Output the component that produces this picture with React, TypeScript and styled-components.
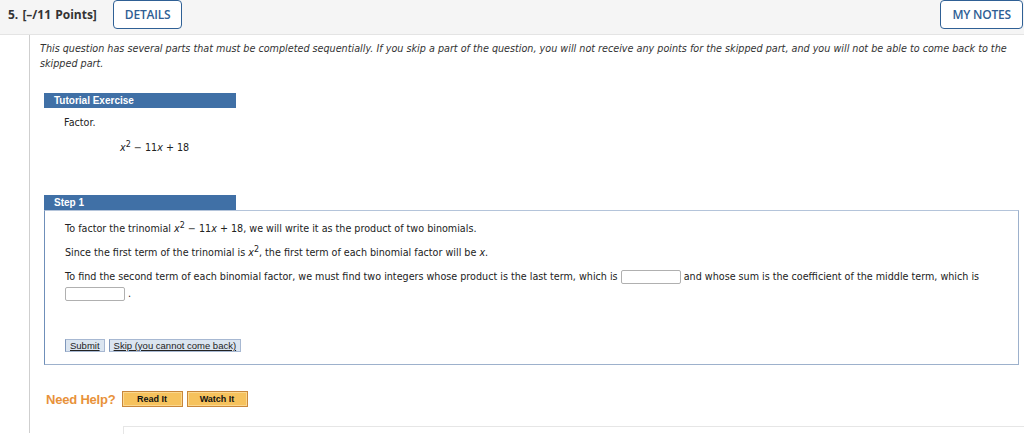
import React from 'react';
import styled, {createGlobalStyle} from 'styled-components';

const GlobalStyle = createGlobalStyle`
    html, body {
        margin: 0;
        padding: 0;
        background: #fff;
    }
    body {
        width: 1024px;
        height: 434px;
        overflow: hidden;
        font-family: "DejaVu Sans", Verdana, sans-serif;
        color: #222;
    }
    sup {
        font-size: 8px;
        line-height: 0;
        vertical-align: 4px;
    }
`

const Header = styled.header`
    display: flex;
    align-items: center;
    height: 35px;
    padding: 0 1px 6px 8px;
    box-sizing: border-box;
    background: #f5f5f5;
    border-bottom: 1px solid #e4e4e4;
`

const QuestionTitle = styled.h2`
    margin: 0;
    font-family: "Open Sans", sans-serif;
    font-size: 12px;
    font-weight: 700;
    color: #333;
    word-spacing: 1px;
`

const HeaderButton = styled.button<{ push?: boolean }>`
    height: 29px;
    margin-left: ${props => props.push ? 'auto' : '16px'};
    padding: 0 11px;
    background: #fff;
    border: 1px solid #2f6095;
    border-radius: 4px;
    font-family: "Open Sans", sans-serif;
    font-size: 12px;
    font-weight: 600;
    color: #2f6095;
    letter-spacing: -0.2px;
`

const Main = styled.main`
    margin-left: 29px;
    border-left: 1px solid #cfcfcf;
    padding: 6px 0 0 10px;
    height: 398px;
    box-sizing: border-box;
`

const Intro = styled.p`
    margin: 0;
    font-size: 9.65px;
    font-style: italic;
    line-height: 15px;
    color: #333;
    padding-right: 8px;
`

const Section = styled.section<{ top: number }>`
    margin: ${props => props.top}px 4px 0 4px;
`

const BarTitle = styled.div`
    width: 192px;
    height: 15px;
    box-sizing: border-box;
    padding-left: 10px;
    background: #4070a6;
    color: #fff;
    font-family: "Liberation Sans", Arial, sans-serif;
    font-size: 10px;
    font-weight: 700;
    line-height: 15px;
`

const Plain = styled.p<{ indent: number; top: number }>`
    margin: ${props => props.top}px 0 0 ${props => props.indent}px;
    font-size: 9.6px;
    line-height: 14px;
`

const Var = styled.i`
    font-family: "DejaVu Sans", Verdana, sans-serif;
`

const StepBox = styled.div`
    border: 1px solid #9db1cc;
    border-left-color: #6f8fb9;
    border-top-color: #b4c4da;
    padding: 11px 20px 0 20px;
    width: 975px;
    box-sizing: border-box;
    height: 155px;
    font-size: 9.6px;
`

const StepLine = styled.p<{ gap?: number }>`
    margin: 0 0 ${props => props.gap ?? 10}px 0;
    line-height: 14px;
`

const AnswerLines = styled.p`
    margin: 0;
    line-height: 17px;
`

const Answer = styled.input`
    width: 60px;
    height: 14px;
    box-sizing: border-box;
    margin: 0;
    padding: 0;
    border: 1px solid #b0b0b0;
    border-radius: 2px;
    vertical-align: middle;
`

const ButtonRow = styled.div`
    display: flex;
    gap: 4px;
    margin-top: 37px;
`

const PlainButton = styled.button`
    height: 13px;
    padding: 0 4px;
    background: #dbe5f0;
    border: 1px solid #a7b8d2;
    border-left-color: #7f97bb;
    font-family: "Liberation Sans", Arial, sans-serif;
    font-size: 9.5px;
    line-height: 11px;
    color: #222;
    text-decoration: underline;
`

const HelpRow = styled.div`
    display: flex;
    align-items: center;
    gap: 4px;
    margin: 26px 0 0 6px;
`

const HelpLabel = styled.span`
    font-family: "Liberation Sans", Arial, sans-serif;
    font-size: 13px;
    font-weight: 700;
    color: #e8923a;
    margin-right: 2px;
    letter-spacing: -0.2px;
`

const HelpButton = styled.button`
    width: 61px;
    height: 16px;
    padding: 0;
    background: #f6c25d;
    border: 1px solid #c9873a;
    box-shadow: inset 0 0 0 1px #fbd88f;
    font-family: "Liberation Sans", Arial, sans-serif;
    font-size: 9px;
    font-weight: 700;
    color: #111;
`

const NextPanel = styled.div`
    margin: 19px 0 0 83px;
    height: 10px;
    border-top: 1px solid #e6e6e6;
    border-left: 1px solid #e6e6e6;
`

export default function App() {
    return (
        <>
            <GlobalStyle/>
            <Header>
                <QuestionTitle>5. [–/11 Points]</QuestionTitle>
                <HeaderButton>DETAILS</HeaderButton>
                <HeaderButton push>MY NOTES</HeaderButton>
            </Header>
            <Main>
                <Intro>
                    This question has several parts that must be completed sequentially. If you skip a part of the
                    question, you will not receive any points for the skipped part, and you will not be able to come
                    back to the skipped part.
                </Intro>
                <Section top={22}>
                    <BarTitle>Tutorial Exercise</BarTitle>
                    <Plain indent={20} top={8}>Factor.</Plain>
                    <Plain indent={76} top={11}><Var>x</Var><sup>2</sup> − 11<Var>x</Var> + 18</Plain>
                </Section>
                <Section top={40}>
                    <BarTitle>Step 1</BarTitle>
                    <StepBox>
                        <StepLine>To factor the trinomial <Var>x</Var><sup>2</sup> − 11<Var>x</Var> + 18, we will write
                            it as the product of two binomials.</StepLine>
                        <StepLine gap={8}>Since the first term of the trinomial is <Var>x</Var><sup>2</sup>, the first term of
                            each binomial factor will be <Var>x</Var>.</StepLine>
                        <AnswerLines>To find the second term of each binomial factor, we must find two integers whose
                            product is the last term, which is <Answer/> and whose sum is the coefficient of the
                            middle term, which is <Answer/> .</AnswerLines>
                        <ButtonRow>
                            <PlainButton>Submit</PlainButton>
                            <PlainButton>Skip (you cannot come back)</PlainButton>
                        </ButtonRow>
                    </StepBox>
                </Section>
                <HelpRow>
                    <HelpLabel>Need Help?</HelpLabel>
                    <HelpButton>Read It</HelpButton>
                    <HelpButton>Watch It</HelpButton>
                </HelpRow>
                <NextPanel/>
            </Main>
        </>
    );
}
